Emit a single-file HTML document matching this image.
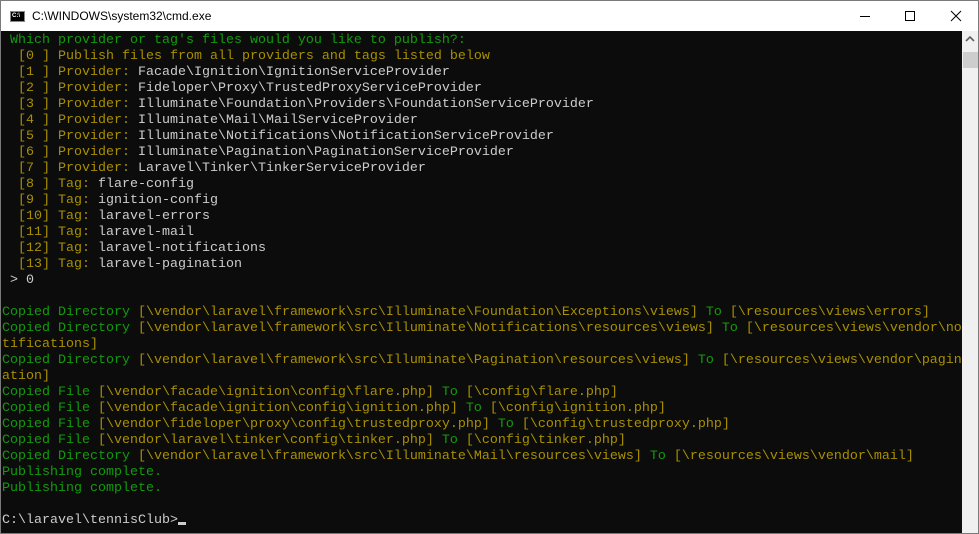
<!DOCTYPE html>
<html><head><style>
html,body{margin:0;padding:0;width:979px;height:534px;overflow:hidden;background:#fff;}
.win{position:absolute;left:0;top:0;width:977px;height:532px;border:1px solid #7a7a7a;background:#fff;}
.title{position:absolute;left:0;top:0;width:977px;height:30px;background:#fff;font:12px "Liberation Sans",sans-serif;}
.title .t{position:absolute;left:31px;top:8px;color:#000;}
.ico{position:absolute;left:9px;top:10px;width:15px;height:11px;background:#000;border:1px solid #888;box-sizing:border-box;}
.ico span{position:absolute;left:1px;top:1px;font:bold 6px "Liberation Sans";color:#fff;}
.con{position:absolute;left:0;top:30px;width:961px;height:502px;background:#0c0c0c;overflow:hidden;}
pre{margin:0;position:absolute;left:1px;top:2px;font:13.33px/16px "Liberation Mono",monospace;color:#cccccc;white-space:pre;}
.g{color:#139a0e}.y{color:#a89000}
.sb{position:absolute;left:961px;top:30px;width:16px;height:502px;background:#f0f0f0;}
.thumb{position:absolute;left:1px;top:21px;width:15px;height:16px;background:#cdcdcd;}
.cur{display:inline-block;width:8px;height:3px;background:#ccc;vertical-align:-2px;}
</style></head><body>
<div class="win">
<div class="title"><div class="ico"><span>C:\</span></div><span class="t">C:\WINDOWS\system32\cmd.exe</span>
<svg style="position:absolute;left:830px;top:0" width="147" height="30">
<line x1="29" y1="15.5" x2="39" y2="15.5" stroke="#000"/>
<rect x="74.5" y="10.5" width="9" height="9" fill="none" stroke="#000"/>
<path d="M120 10 L130 20 M130 10 L120 20" stroke="#000"/>
</svg></div>
<div class="con"><pre><span class="g"> Which provider or tag's files would you like to publish?:</span>
<span class="y">  [0 ] Publish files from all providers and tags listed below</span>
<span class="y">  [1 ] Provider: </span>Facade\Ignition\IgnitionServiceProvider
<span class="y">  [2 ] Provider: </span>Fideloper\Proxy\TrustedProxyServiceProvider
<span class="y">  [3 ] Provider: </span>Illuminate\Foundation\Providers\FoundationServiceProvider
<span class="y">  [4 ] Provider: </span>Illuminate\Mail\MailServiceProvider
<span class="y">  [5 ] Provider: </span>Illuminate\Notifications\NotificationServiceProvider
<span class="y">  [6 ] Provider: </span>Illuminate\Pagination\PaginationServiceProvider
<span class="y">  [7 ] Provider: </span>Laravel\Tinker\TinkerServiceProvider
<span class="y">  [8 ] Tag: </span>flare-config
<span class="y">  [9 ] Tag: </span>ignition-config
<span class="y">  [10] Tag: </span>laravel-errors
<span class="y">  [11] Tag: </span>laravel-mail
<span class="y">  [12] Tag: </span>laravel-notifications
<span class="y">  [13] Tag: </span>laravel-pagination
 &gt; 0

<span class="g">Copied Directory </span><span class="y">[\vendor\laravel\framework\src\Illuminate\Foundation\Exceptions\views]</span><span class="g"> To </span><span class="y">[\resources\views\errors]</span>
<span class="g">Copied Directory </span><span class="y">[\vendor\laravel\framework\src\Illuminate\Notifications\resources\views]</span><span class="g"> To </span><span class="y">[\resources\views\vendor\no
tifications]</span>
<span class="g">Copied Directory </span><span class="y">[\vendor\laravel\framework\src\Illuminate\Pagination\resources\views]</span><span class="g"> To </span><span class="y">[\resources\views\vendor\pagin
ation]</span>
<span class="g">Copied File </span><span class="y">[\vendor\facade\ignition\config\flare.php]</span><span class="g"> To </span><span class="y">[\config\flare.php]</span>
<span class="g">Copied File </span><span class="y">[\vendor\facade\ignition\config\ignition.php]</span><span class="g"> To </span><span class="y">[\config\ignition.php]</span>
<span class="g">Copied File </span><span class="y">[\vendor\fideloper\proxy\config\trustedproxy.php]</span><span class="g"> To </span><span class="y">[\config\trustedproxy.php]</span>
<span class="g">Copied File </span><span class="y">[\vendor\laravel\tinker\config\tinker.php]</span><span class="g"> To </span><span class="y">[\config\tinker.php]</span>
<span class="g">Copied Directory </span><span class="y">[\vendor\laravel\framework\src\Illuminate\Mail\resources\views]</span><span class="g"> To </span><span class="y">[\resources\views\vendor\mail]</span>
<span class="g">Publishing complete.</span>
<span class="g">Publishing complete.</span>

C:\laravel\tennisClub&gt;<span class="cur"></span></pre></div>
<div class="sb"><svg width="16" height="16"><path d="M4 10 L8 6 L12 10" fill="none" stroke="#606060" stroke-width="1.6"/></svg><div class="thumb"></div></div>
</div>
</body></html>
